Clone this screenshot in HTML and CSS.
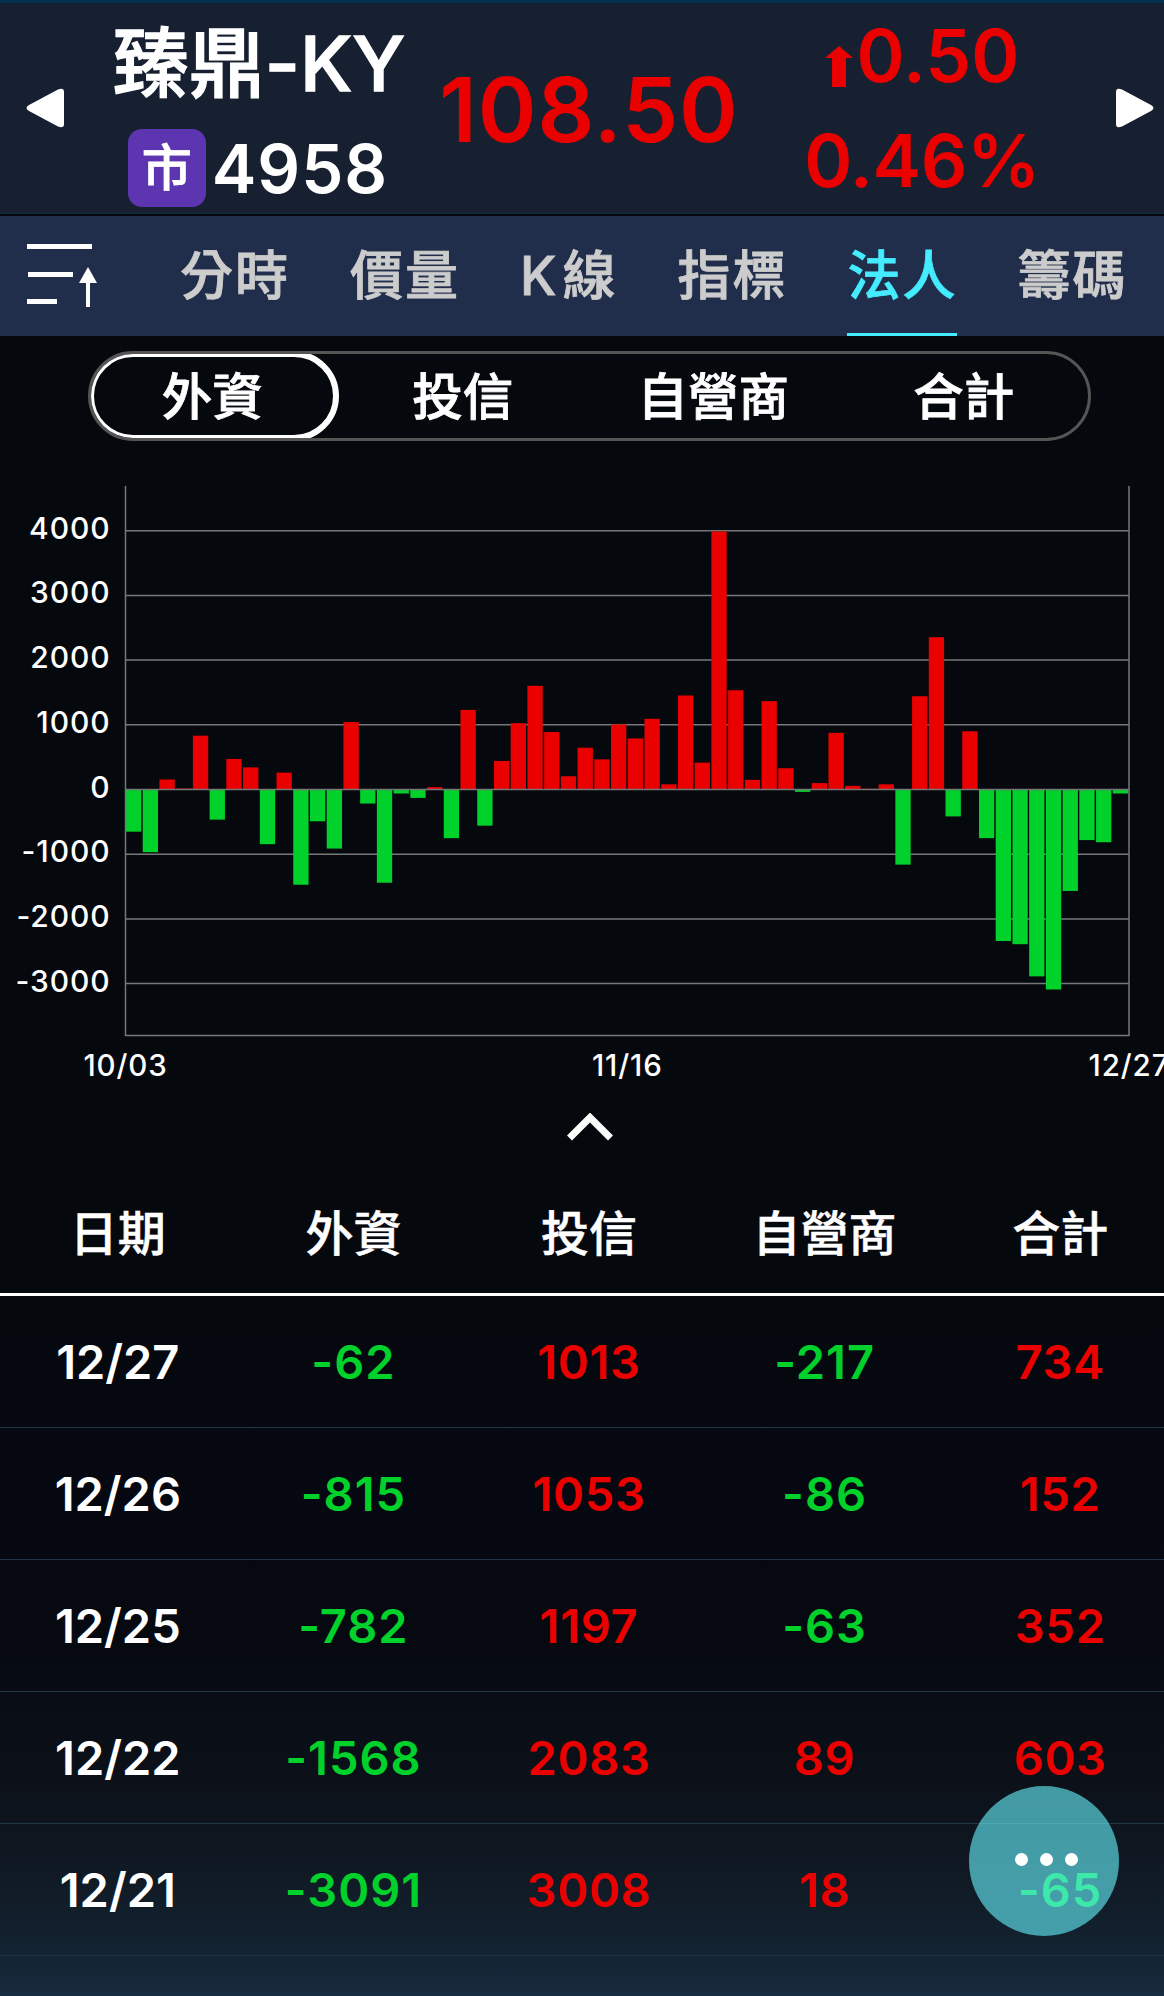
FILE: index.html
```html
<!DOCTYPE html>
<html lang="zh-Hant">

<head>
	<meta charset="utf-8">
	<title>臻鼎-KY 4958</title>
	<link rel="stylesheet" href="styles.css">
</head>

<body>
	<header class="quote">
		<svg class="arrow prev" width="40" height="40" viewBox="0 0 40 40">
			<path d="M4 17 L33 1.500 Q39 -1 39 4 V36 Q39 41 33 38.500 L4 23 Q-1 20 4 17 Z" />
		</svg>
		<div class="stock">
			<div class="name">臻鼎-KY</div>
			<div class="code"><span class="badge">市</span><span>4958</span></div>
		</div>
		<div class="price">108.50</div>
		<div class="change">
			<div class="diff">
				<svg width="28" height="41" viewBox="0 0 28 41">
					<path d="M14 0 L28 12 H21 V41 H7 V12 H0 Z" />
				</svg>
				<span>0.50</span>
			</div>
			<div class="percent">0.46%</div>
		</div>
		<svg class="arrow next" width="40" height="40" viewBox="0 0 40 40">
			<path d="M36 17 L7 1.500 Q1 -1 1 4 V36 Q1 41 7 38.500 L36 23 Q41 20 36 17 Z" />
		</svg>
	</header>

	<nav class="tabs">
		<svg class="menu" width="72" height="64" viewBox="0 0 72 64">
			<path d="M0 0 H65 V5 H0 Z M1 28 H46 V33 H1 Z M0 55 H30 V60 H0 Z" />
			<path d="M61 23 L70 39 H63 V63 H59 V39 H52 Z" />
		</svg>
		<a class="tab">分時</a>
		<a class="tab">價量</a>
		<a class="tab"><span class="latin">K</span>線</a>
		<a class="tab">指標</a>
		<a class="tab active">法人</a>
		<a class="tab">籌碼</a>
	</nav>

	<div class="segments">
		<div class="segment selected">外資</div>
		<div class="segment">投信</div>
		<div class="segment">自營商</div>
		<div class="segment">合計</div>
	</div>

	<svg class="chart" id="chart" width="1164" height="650" viewBox="0 0 1164 650"></svg>

	<div class="collapse">
		<svg width="46" height="28" viewBox="0 0 46 28">
			<path d="M2.500 25 L23 4.500 L43.500 25" />
		</svg>
	</div>

	<div class="table">
		<div class="row head">
			<div>日期</div>
			<div>外資</div>
			<div>投信</div>
			<div>自營商</div>
			<div>合計</div>
		</div>
		<div class="row">
			<div>12/27</div>
			<div class="down">-62</div>
			<div class="up">1013</div>
			<div class="down">-217</div>
			<div class="up">734</div>
		</div>
		<div class="row">
			<div>12/26</div>
			<div class="down">-815</div>
			<div class="up">1053</div>
			<div class="down">-86</div>
			<div class="up">152</div>
		</div>
		<div class="row">
			<div>12/25</div>
			<div class="down">-782</div>
			<div class="up">1197</div>
			<div class="down">-63</div>
			<div class="up">352</div>
		</div>
		<div class="row">
			<div>12/22</div>
			<div class="down">-1568</div>
			<div class="up">2083</div>
			<div class="up">89</div>
			<div class="up">603</div>
		</div>
		<div class="row">
			<div>12/21</div>
			<div class="down">-3091</div>
			<div class="up">3008</div>
			<div class="up">18</div>
			<div class="down">-65</div>
		</div>
	</div>

	<div class="more"><i></i><i></i><i></i></div>

	<script>
		const values = [
			-652, -969, 155, 15, 832, -466, 472, 342, -845, 261,
			-1472, -491, -913, 1043, -217, -1441, -62, -130, 37, -752,
			1230, -559, 441, 1025, 1602, 888, 205, 646, 466, 1006,
			789, 1093, 80, 1453, 416, 3988, 1534, 149, 1366, 329,
			-37, 99, 876, 56, 12, 80, -1161, 1441, 2354, -416,
			900, -752, -2342, -2391, -2888, -3091, -1568, -782, -815, -62
		];
		const left = 125.5, right = 1129, top_ = 45, bottom = 594.5;
		const zero = 348.5, unit = 0.0647;
		const step = (right - left) / values.length;

		let out = '';
		for (let v = 4000; v >= -3000; v -= 1000) {
			const y = zero - v * unit;
			if (v !== 0) out += `<path class="grid" d="M${left} ${y} H${right}" />`;
			out += `<text class="label" x="110.500" y="${y + 8}" text-anchor="end">${v}</text>`;
		}
		values.forEach((v, i) => {
			const h = Math.abs(v) * unit;
			const y = v > 0 ? zero - h : zero;
			out += `<rect class="${v > 0 ? 'bar-up' : 'bar-down'}" x="${left + i * step + 0.5}" y="${y}" width="15.300" height="${h}" />`;
		});
		out += `<path class="grid" d="M${left} ${zero} H${right}" />`;
		out += `<path class="axis" d="M${left} ${top_} V${bottom} H${right} V${top_}" />`;
		['10/03', '11/16', '12/27'].forEach((d, i) => {
			const x = left + (right - left) * i / 2;
			out += `<text class="label date" x="${x}" y="634.500" text-anchor="middle">${d}</text>`;
		});
		document.getElementById('chart').innerHTML = out;
	</script>
</body>

</html>
```
FILE: styles.css
```css
* {
	box-sizing: border-box;
}

body {
	margin: 0;
	width: 1164px;
	height: 1996px;
	overflow: hidden;
	position: relative;
	color: #fff;
	font-family: Inter, "Noto Sans CJK TC", sans-serif;
	font-weight: 580;
	background: linear-gradient(#05080d 0, #05080d 1296px, #050810 1420px, #060910 1640px, #0c1119 1780px, #0f1721 1850px, #12202d 1930px, #162b3d 1996px);
}

.quote {
	display: grid;
	grid-template-columns: 89px 340px 320px 342px 73px;
	height: 216px;
	background: #162030;
	border-top: 3px solid #04304f;
	border-bottom: 2px solid #05080d;
	box-shadow: inset 0 -1px #0a2c40;
}

.arrow {
	fill: #fff;
	margin-top: 85px;
}

.prev {
	margin-left: 25px;
}

.next {
	margin-left: 24px;
}

/* Noto has no semibold, so medium gets a thin stroke */
.name,
.badge,
.tab,
.segment,
.head {
	font-weight: 500;
	-webkit-text-stroke: 0.8px currentColor;
}

.name {
	height: 122px;
	line-height: 120px;
	font-size: 76px;
	text-align: center;
	white-space: nowrap;
	-webkit-text-stroke-width: 1.4px;
}

.code {
	display: flex;
	justify-content: center;
	align-items: center;
	gap: 6px;
	height: 86px;
	padding-right: 2px;
	font-size: 67px;
	letter-spacing: 1px;
}

.badge {
	width: 78px;
	height: 78px;
	border-radius: 14px;
	background: #5e35b1;
	font-size: 50px;
	line-height: 79px;
	letter-spacing: 0;
	text-align: center;
}

.price {
	color: #eb0000;
	font-size: 89px;
	line-height: 213px;
	letter-spacing: 1px;
	text-align: center;
}

.change {
	padding-left: 4px;
	color: #eb0000;
	font-size: 73px;
	text-align: center;
}

.diff {
	display: flex;
	justify-content: center;
	align-items: center;
	gap: 4px;
	height: 105px;
}

.diff svg {
	fill: #eb0000;
	margin-top: 21px;
}

.percent {
	line-height: 105px;
	letter-spacing: -0.5px;
}

.tabs {
	display: flex;
	gap: 60px;
	height: 120px;
	padding-left: 28px;
	background: #212e4b;
}

.menu {
	fill: #fff;
	margin: 28px 21px 0 -1px;
}

.tab {
	color: #ccc;
	font-size: 53px;
	line-height: 120px;
	letter-spacing: 2px;
	white-space: nowrap;
}

.latin {
	letter-spacing: 6px;
}

.active {
	color: #45ebff;
	border-bottom: 3px solid #45ebff;
}

.segments {
	display: flex;
	width: 1003px;
	height: 90px;
	margin: 15px 0 0 88px;
	border: 3px solid #555;
	border-radius: 45px;
	overflow: hidden;
}

.segment {
	flex: none;
	width: 250.5px;
	padding-right: 2px;
	font-size: 50.5px;
	line-height: 86px;
	text-align: center;
}

.selected {
	margin: -3px 0 -3px -3px;
	border: 6px solid #fff;
	border-radius: 45px;
	line-height: 80px;
}

.chart {
	display: block;
}

.grid,
.axis {
	fill: none;
	stroke: #77777a;
	stroke-width: 1.5;
}

.label {
	fill: #fff;
	font-size: 30px;
	font-weight: 550;
	letter-spacing: 0.9px;
}

.date {
	font-size: 29.5px;
	letter-spacing: 0.9px;
}

.bar-up {
	fill: #eb0000;
}

.bar-down {
	fill: #00d12b;
}

.collapse {
	display: flex;
	justify-content: center;
	width: 1179px;
	height: 82px;
	padding-top: 22px;
}

.collapse svg {
	fill: none;
	stroke: #fff;
	stroke-width: 7;
}

.table {
	width: 1178px;
}

.row {
	display: grid;
	grid-template-columns: repeat(5, 1fr);
	height: 132px;
	line-height: 132px;
	font-size: 47px;
	text-align: center;
	border-bottom: 1px solid #223646;
}

.head {
	height: 123px;
	line-height: 122px;
	font-size: 48px;
	border-bottom: 3px solid #fff;
	-webkit-text-stroke-width: 0.5px;
}

.up {
	color: #eb0000;
	letter-spacing: 0.7px;
}

.down {
	color: #00d12b;
	letter-spacing: 1px;
}

/* floating menu button */
.more {
	position: absolute;
	left: 969px;
	top: 1786px;
	display: flex;
	justify-content: center;
	align-items: center;
	gap: 12px;
	width: 150px;
	height: 150px;
	padding: 0 0 4px 4px;
	border-radius: 50%;
	background: rgba(104, 245, 255, 0.6);
}

.more i {
	width: 13px;
	height: 13px;
	border-radius: 50%;
	background: #fff;
}
```
